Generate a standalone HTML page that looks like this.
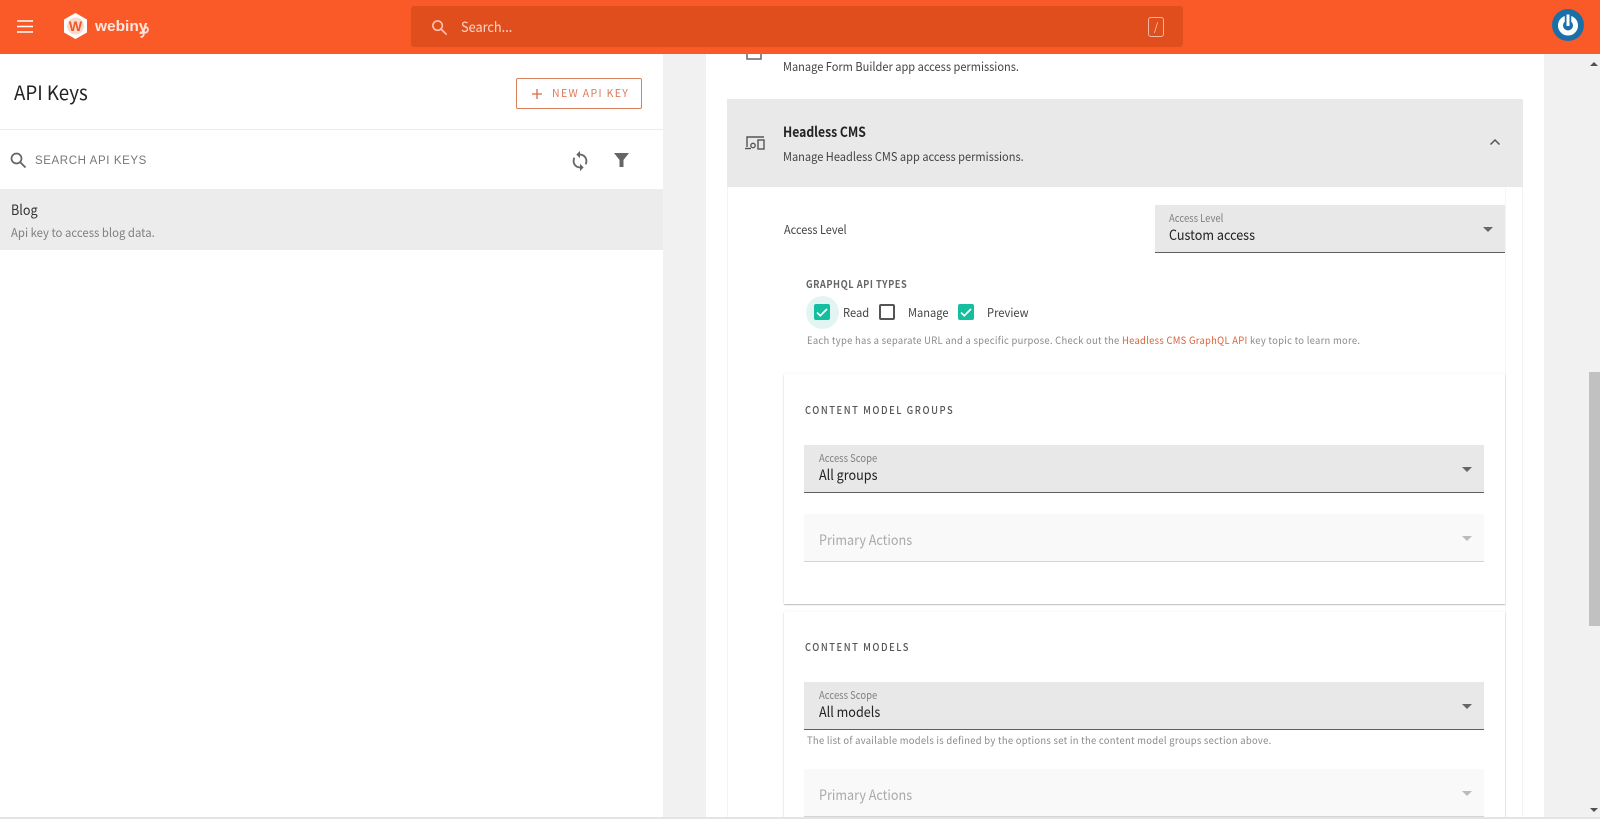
<!DOCTYPE html>
<html><head><meta charset="utf-8"><style>
*{box-sizing:border-box}
html,body{margin:0;padding:0;width:1600px;height:819px;overflow:hidden;background:#fff;font-family:"Noto Sans CJK JP","Liberation Sans",sans-serif;color:#333}
#w{position:absolute;left:0;top:0;width:1600px;height:819px;overflow:hidden;background:#fff}
.a{position:absolute;white-space:nowrap;transform-origin:0 0}
.sel{position:absolute;background:#e8e8e8;border-bottom:1px solid #5f5f5f}
.sel.dis{background:#f9f9f9;border-bottom:1px solid #d4d4d4}
.lab{position:absolute;left:14px;top:7px;font-size:11px;line-height:13px;color:#808080;white-space:nowrap;transform-origin:0 0;transform:scaleX(.86)}
.val{position:absolute;left:14px;top:21px;font-size:14px;line-height:18px;color:#222;white-space:nowrap;transform-origin:0 0;transform:scaleX(.9)}
.ph{position:absolute;left:14px;top:16px;font-size:14px;line-height:20px;color:#aaa;white-space:nowrap;transform-origin:0 0;transform:scaleX(.9)}
.w680 .lab,.w680 .val,.w680 .ph{left:14.500px}
.arr{position:absolute;right:12px;top:22px;width:0;height:0;border-left:5px solid transparent;border-right:5px solid transparent;border-top:5px solid #666}
.dis .arr{border-top-color:#bbb}
.card{position:absolute;left:784px;width:721px;background:#fff;box-shadow:0 1px 1px rgba(0,0,0,.25),0 0 3px rgba(0,0,0,.06)}
.h{font-size:10.500px;font-weight:500;letter-spacing:1.750px;color:#555;line-height:14px;transform:scaleX(.89)}
.cb{position:absolute;width:16px;height:16px;border-radius:2px;background:#14bfa0}
.cb svg{display:block}
.help{font-size:10px;line-height:14px;color:#8a8a8a;letter-spacing:.3px;transform:scaleX(.943)}
.t12{font-size:12px;line-height:17px;color:#444}
</style></head><body><div id="w">
<div class="a" style="left:0;top:0;width:1600px;height:54px;background:#fa5a28"></div>
<svg class="a" style="left:15px;top:16px" width="22" height="22" viewBox="0 0 22 22"><path d="M2 5h16M2 10.500h16M2 16h16" stroke="#fff" stroke-width="1.600"/></svg>
<svg class="a" style="left:62px;top:12px" width="27" height="28" viewBox="0 0 27 28"><path d="M13.500 1.500l11 6.300v12.400l-11 6.300-11-6.300V7.800z" fill="#fff" stroke="#fff" stroke-linejoin="round"/><circle cx="13.500" cy="14" r="8.500" fill="#f9d9cc"/><text x="13.500" y="19" font-family="Liberation Sans" font-size="14" font-weight="700" fill="#ee5a2c" text-anchor="middle">W</text></svg>
<div class="a" style="left:95px;top:16px;font:700 15px/22px 'Liberation Sans',sans-serif;color:#fff;opacity:.85;transform:scaleX(1.03)">webiny</div>
<svg class="a" style="left:138px;top:25px" width="13" height="14" viewBox="0 0 13 14"><path d="M2 7c4 2 8 .5 8-2.500S6.500 2 6 4.500 7 12 2.500 12" fill="none" stroke="#fde3d8" stroke-width="1.800"/></svg>
<div class="a" style="left:411px;top:6px;width:772px;height:41px;background:#e04e1e;border-radius:3px"></div>
<svg class="a" style="left:431px;top:19px" width="17" height="17" viewBox="0 0 18 18"><circle cx="7" cy="7" r="5" fill="none" stroke="#f8c4ae" stroke-width="1.700"/><path d="M11 11l5.500 5.500" stroke="#f8c4ae" stroke-width="1.800"/></svg>
<div class="a" style="left:461px;top:17px;font-size:14px;line-height:20px;color:#fbd5c5;transform:scaleX(.91)">Search...</div>
<div class="a" style="left:1148px;top:17px;width:16px;height:20px;border:1px solid #f3b79f;border-radius:3px;color:#f8d0bf;font-size:11px;line-height:18px;text-align:center">/</div>
<svg class="a" style="left:1551px;top:8px" width="34" height="34" viewBox="0 0 34 34"><circle cx="17" cy="17" r="16" fill="#1a6fa8"/><circle cx="17" cy="17.500" r="7.500" fill="none" stroke="#fff" stroke-width="5"/><path d="M17 7v10" stroke="#1a6fa8" stroke-width="6.500"/><path d="M17 6.500v11.500" stroke="#fff" stroke-width="3"/></svg>

<div class="a" style="left:663px;top:54px;width:43px;height:765px;background:#f1f1f1"></div>
<div class="a" style="left:1544px;top:54px;width:56px;height:765px;background:#f1f1f1"></div>

<div class="a" style="left:14px;top:77px;font-size:20px;line-height:30px;color:#222;transform:scaleX(.935)">API Keys</div>
<div class="a" style="left:516px;top:78px;width:126px;height:31px;border:1px solid #d9805f;border-radius:2px"></div>
<svg class="a" style="left:531px;top:88px" width="12" height="12" viewBox="0 0 12 12"><path d="M6 1v10M1 6h10" stroke="#dc6a42" stroke-width="1.300"/></svg>
<div class="a" style="left:552px;top:86px;font-size:10.500px;line-height:16px;letter-spacing:1.350px;color:#dc7a58">NEW API KEY</div>
<div class="a" style="left:0;top:129px;width:663px;height:1px;background:#ececec"></div>
<svg class="a" style="left:9px;top:151px" width="18" height="18" viewBox="0 0 18 18"><circle cx="7.500" cy="7.500" r="5" fill="none" stroke="#666" stroke-width="1.700"/><path d="M11.500 11.500l5 5" stroke="#666" stroke-width="1.900"/></svg>
<div class="a" style="left:35px;top:153px;font:11.500px/16px 'Liberation Sans',sans-serif;letter-spacing:.6px;color:#777">SEARCH API KEYS</div>
<svg class="a" style="left:569px;top:150px" width="22" height="22" viewBox="0 0 24 24"><path fill="#666" d="M12 4V1L8 5l4 4V6c3.310 0 6 2.690 6 6 0 1.010-.25 1.970-.7 2.800l1.460 1.460C19.540 15.030 20 13.570 20 12c0-4.420-3.580-8-8-8zm0 14c-3.310 0-6-2.690-6-6 0-1.010.25-1.970.7-2.800L5.240 7.740C4.460 8.970 4 10.430 4 12c0 4.420 3.580 8 8 8v3l4-4-4-4v3z"/></svg>
<svg class="a" style="left:613px;top:151px" width="17" height="18" viewBox="0 0 17 18"><path fill="#666" d="M1 2h15l-5.500 7v7h-4V9z"/></svg>
<div class="a" style="left:0;top:189px;width:663px;height:61px;background:#ececec"></div>
<div class="a" style="left:11px;top:200px;font-size:14px;line-height:20px;color:#333;transform:scaleX(.9)">Blog</div>
<div class="a t12" style="left:11px;top:224px;color:#808080;transform:scaleX(.946)">Api key to access blog data.</div>

<svg class="a" style="left:745px;top:54px" width="18" height="8" viewBox="0 0 18 8"><path d="M2 0v5h14V0" fill="none" stroke="#666" stroke-width="1.500"/></svg>
<div class="a t12" style="left:783px;top:58px;transform:scaleX(.92)">Manage Form Builder app access permissions.</div>
<div class="a" style="left:727px;top:99px;width:796px;height:88px;background:#e9e9e9"></div>
<div class="a" style="left:1505px;top:187px;width:18px;height:632px;background:#fff;border-left:1px solid #f6f6f6;border-right:1px solid #f3f3f3"></div>
<div class="a" style="left:727px;top:187px;width:1px;height:632px;background:#f3f3f3"></div>
<svg class="a" style="left:744px;top:133px" width="22" height="20" viewBox="0 0 22 20"><path d="M3 14V4h17" fill="none" stroke="#555" stroke-width="1.400"/><path d="M1 15.500h6" stroke="#555" stroke-width="1.400"/><circle cx="9" cy="12.500" r="2.200" fill="none" stroke="#555" stroke-width="1.300"/><rect x="14" y="7" width="6" height="9" fill="none" stroke="#555" stroke-width="1.400"/></svg>
<div class="a" style="left:783px;top:122px;font-size:14px;font-weight:700;line-height:20px;color:#222;transform:scaleX(.87)">Headless CMS</div>
<div class="a t12" style="left:783px;top:148px;transform:scaleX(.92)">Manage Headless CMS app access permissions.</div>
<svg class="a" style="left:1489px;top:138px" width="12" height="8" viewBox="0 0 12 8"><path d="M1.500 6.500L6 2l4.500 4.500" fill="none" stroke="#555" stroke-width="1.500"/></svg>

<div class="a t12" style="left:784px;top:221px;transform:scaleX(.91)">Access Level</div>
<div class="sel" style="left:1155px;top:205px;width:350px;height:48px"><div class="lab">Access Level</div><div class="val">Custom access</div><div class="arr"></div></div>

<div class="a" style="left:806px;top:277px;font-size:10.500px;font-weight:700;line-height:15px;letter-spacing:.6px;color:#666;transform:scaleX(.88)">GRAPHQL API TYPES</div>
<div class="a" style="left:806px;top:296px;width:33px;height:33px;border-radius:50%;background:#e3f5f2"></div>
<div class="cb" style="left:814px;top:304px"><svg width="16" height="16" viewBox="0 0 16 16"><path d="M3 8.500l3.300 3.200L13 5" fill="none" stroke="#fff" stroke-width="1.700"/></svg></div>
<div class="a t12" style="left:843px;top:304px;transform:scaleX(.93)">Read</div>
<div class="a" style="left:879px;top:304px;width:16px;height:16px;border:2px solid #555;border-radius:2px"></div>
<div class="a t12" style="left:908px;top:304px;transform:scaleX(.925)">Manage</div>
<div class="cb" style="left:958px;top:304px"><svg width="16" height="16" viewBox="0 0 16 16"><path d="M3 8.500l3.300 3.200L13 5" fill="none" stroke="#fff" stroke-width="1.700"/></svg></div>
<div class="a t12" style="left:987px;top:304px;transform:scaleX(.93)">Preview</div>
<div class="a help" style="left:806.500px;top:332.500px">Each type has a separate URL and a specific purpose. Check out the <span style="color:#d9623a">Headless CMS GraphQL API</span> key topic to learn more.</div>

<div class="card" style="top:374px;height:230px"></div>
<div class="a h" style="left:805px;top:403.500px">CONTENT MODEL GROUPS</div>
<div class="sel w680" style="left:804px;top:445px;width:680px;height:48px"><div class="lab">Access Scope</div><div class="val">All groups</div><div class="arr"></div></div>
<div class="sel dis w680" style="left:804px;top:514px;width:680px;height:48px"><div class="ph">Primary Actions</div><div class="arr"></div></div>

<div class="card" style="top:612px;height:220px"></div>
<div class="a h" style="left:805px;top:640.500px">CONTENT MODELS</div>
<div class="sel w680" style="left:804px;top:682px;width:680px;height:48px"><div class="lab">Access Scope</div><div class="val">All models</div><div class="arr"></div></div>
<div class="a help" style="left:806.500px;top:733px">The list of available models is defined by the options set in the content model groups section above.</div>
<div class="sel dis w680" style="left:804px;top:769px;width:680px;height:48px"><div class="ph">Primary Actions</div><div class="arr"></div></div>
<div class="a" style="left:0;top:817px;width:1600px;height:2px;background:#e4e4e4"></div>

<div class="a" style="left:1589px;top:372px;width:11px;height:254px;background:#c1c1c1"></div>
<div class="a" style="left:1590px;top:62px;width:0;height:0;border-left:4px solid transparent;border-right:4px solid transparent;border-bottom:4px solid #505050"></div>
<div class="a" style="left:1590px;top:808px;width:0;height:0;border-left:4px solid transparent;border-right:4px solid transparent;border-top:4px solid #505050"></div>
</div></body></html>
